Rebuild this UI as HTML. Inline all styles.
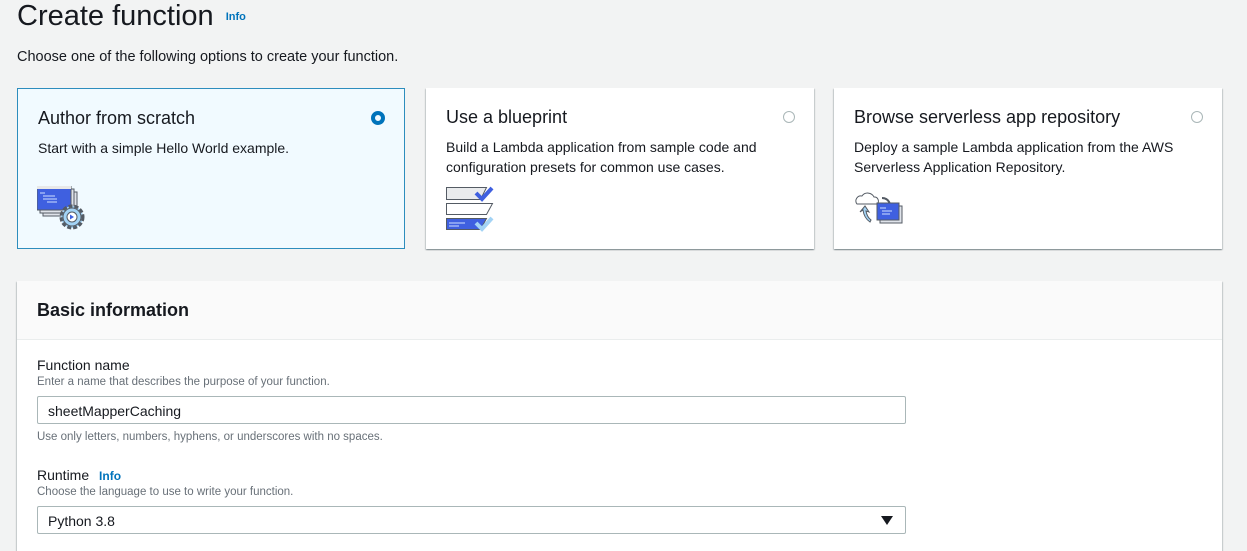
<!DOCTYPE html>
<html><head><style>
body{margin:0;width:1247px;height:542px;overflow:hidden;background:#f2f3f3;font-family:"Liberation Sans",sans-serif;color:#16191f;position:relative}
.a{position:absolute}
.card{position:absolute;top:88px;width:388px;height:161px;background:#fff;box-shadow:0 1px 1px rgba(0,28,36,.3),1px 1px 1px rgba(0,28,36,.15),-1px 1px 1px rgba(0,28,36,.15);box-sizing:border-box}
.card h3{position:absolute;left:20px;top:19px;margin:0;font-weight:normal;font-size:18px}
.card p{position:absolute;left:20px;top:49px;margin:0;font-size:14px;line-height:20px;width:350px}
.rad{position:absolute;right:19px;top:23px;width:12px;height:12px;border:1px solid #aab7b8;border-radius:50%;box-sizing:border-box}
.info{color:#0073bb;font-weight:bold;font-size:12px}
.lbl{font-size:14px}
.desc{font-size:11.5px;color:#687078}
.inp{position:absolute;left:37px;width:869px;height:28px;border:1px solid #aab7b8;border-radius:2px;box-sizing:border-box;background:#fff;font-size:14px;padding:6px 10px}
</style></head><body>
<div class="a" style="left:17px;top:0px;font-size:29px">Create function <span class="info" style="font-size:11px;margin-left:4px;vertical-align:middle">Info</span></div>
<div class="a" style="left:17px;top:49px;font-size:14.5px">Choose one of the following options to create your function.</div>

<div class="card" style="left:17px;background:#f1faff;border:1px solid #2d8dbd;box-shadow:none">
<h3>Author from scratch</h3><p>Start with a simple Hello World example.</p>
<div class="rad" style="border:4px solid #0073bb;width:14px;height:14px;right:19px;top:22px"></div>
<svg class="a" style="left:19px;top:97px" width="50" height="48" viewBox="0 0 50 48">
<rect x="6" y="6" width="34" height="24" fill="#dfe3ea" stroke="#545b64"/>
<rect x="3" y="3" width="34" height="24" fill="#dfe3ea" stroke="#545b64"/>
<rect x="0" y="0" width="34" height="24" fill="#3f60e0" stroke="#545b64"/>
<rect x="0" y="0" width="34" height="3" fill="#e8e8e8"/>
<path d="M3 7h5M6 10h12M6 13h14M10 16h10" stroke="#cfe0ff"/>
<circle cx="35" cy="31" r="11" fill="#a3d3f5" stroke="#545b64" stroke-dasharray="4 2" stroke-width="3"/>
<circle cx="35" cy="31" r="9" fill="#a3d3f5" stroke="#545b64"/>
<circle cx="35" cy="31" r="5" fill="#fff" stroke="#545b64"/>
<path d="M33 28.5v5l4-2.5z" fill="#3f60e0"/>
</svg>
</div>

<div class="card" style="left:426px">
<h3>Use a blueprint</h3><p>Build a Lambda application from sample code and configuration presets for common use cases.</p>
<div class="rad"></div>
<svg class="a" style="left:20px;top:98px" width="50" height="48" viewBox="0 0 50 48">
<path d="M0.5 1.5h40l-6 12h-34z" fill="#e9ebed" stroke="#545b64"/>
<path d="M0.5 17.5h46l-6 11h-40z" fill="#fff" stroke="#545b64"/>
<path d="M0.5 32.5h40l-6 11h-34z" fill="#3f60e0" stroke="#545b64"/>
<path d="M30 7l6 6 10-11" stroke="#3f60e0" stroke-width="4" fill="none"/>
<path d="M30 37l6 6 10-11" stroke="#a3d3f5" stroke-width="4" fill="none"/>
<path d="M3 37h16M3 40h10" stroke="#cfe0ff"/>
</svg>
</div>

<div class="card" style="left:834px">
<h3>Browse serverless app repository</h3><p>Deploy a sample Lambda application from the AWS Serverless Application Repository.</p>
<div class="rad"></div>
<svg class="a" style="left:20px;top:100px" width="50" height="46" viewBox="0 0 50 46">
<path d="M3 16h20a4 4 0 0 0-3-7 7 7 0 0 0-12-1 5 5 0 0 0-5 8z" fill="#fff" stroke="#545b64"/>
<path d="M28 10q6 0 8 6" stroke="#545b64" fill="none" stroke-width="2"/>
<rect x="26" y="18" width="22" height="17" fill="#dfe3ea" stroke="#545b64"/>
<rect x="23" y="15" width="22" height="17" fill="#3f60e0" stroke="#545b64"/>
<path d="M26 20h6M28 23h10M28 26h8" stroke="#cfe0ff"/>
<path d="M16 34q-6-4-7-12l-3 2 5-6 4 6-3-1q1 6 5 9z" fill="#a3d3f5" stroke="#545b64"/>
</svg>
</div>

<div class="a" style="left:17px;top:281px;width:1205px;height:270px;background:#fff;box-shadow:0 1px 1px rgba(0,28,36,.3),1px 1px 1px rgba(0,28,36,.15),-1px 1px 1px rgba(0,28,36,.15)">
<div style="height:58px;background:#fafafa;border-bottom:1px solid #eaeded"></div>
</div>
<div class="a" style="left:37px;top:300px;font-size:18px;font-weight:bold">Basic information</div>
<div class="a lbl" style="left:37px;top:357px">Function name</div>
<div class="a desc" style="left:37px;top:376px">Enter a name that describes the purpose of your function.</div>
<div class="inp" style="top:396px">sheetMapperCaching</div>
<div class="a desc" style="left:37px;top:431px">Use only letters, numbers, hyphens, or underscores with no spaces.</div>
<div class="a lbl" style="left:37px;top:467px">Runtime <span class="info" style="margin-left:6px">Info</span></div>
<div class="a desc" style="left:37px;top:486px">Choose the language to use to write your function.</div>
<div class="inp" style="top:506px">Python 3.8</div>
<svg class="a" style="left:881px;top:516px" width="12" height="9"><path d="M0 0h12L6 9z" fill="#16191f"/></svg>
</body></html>
